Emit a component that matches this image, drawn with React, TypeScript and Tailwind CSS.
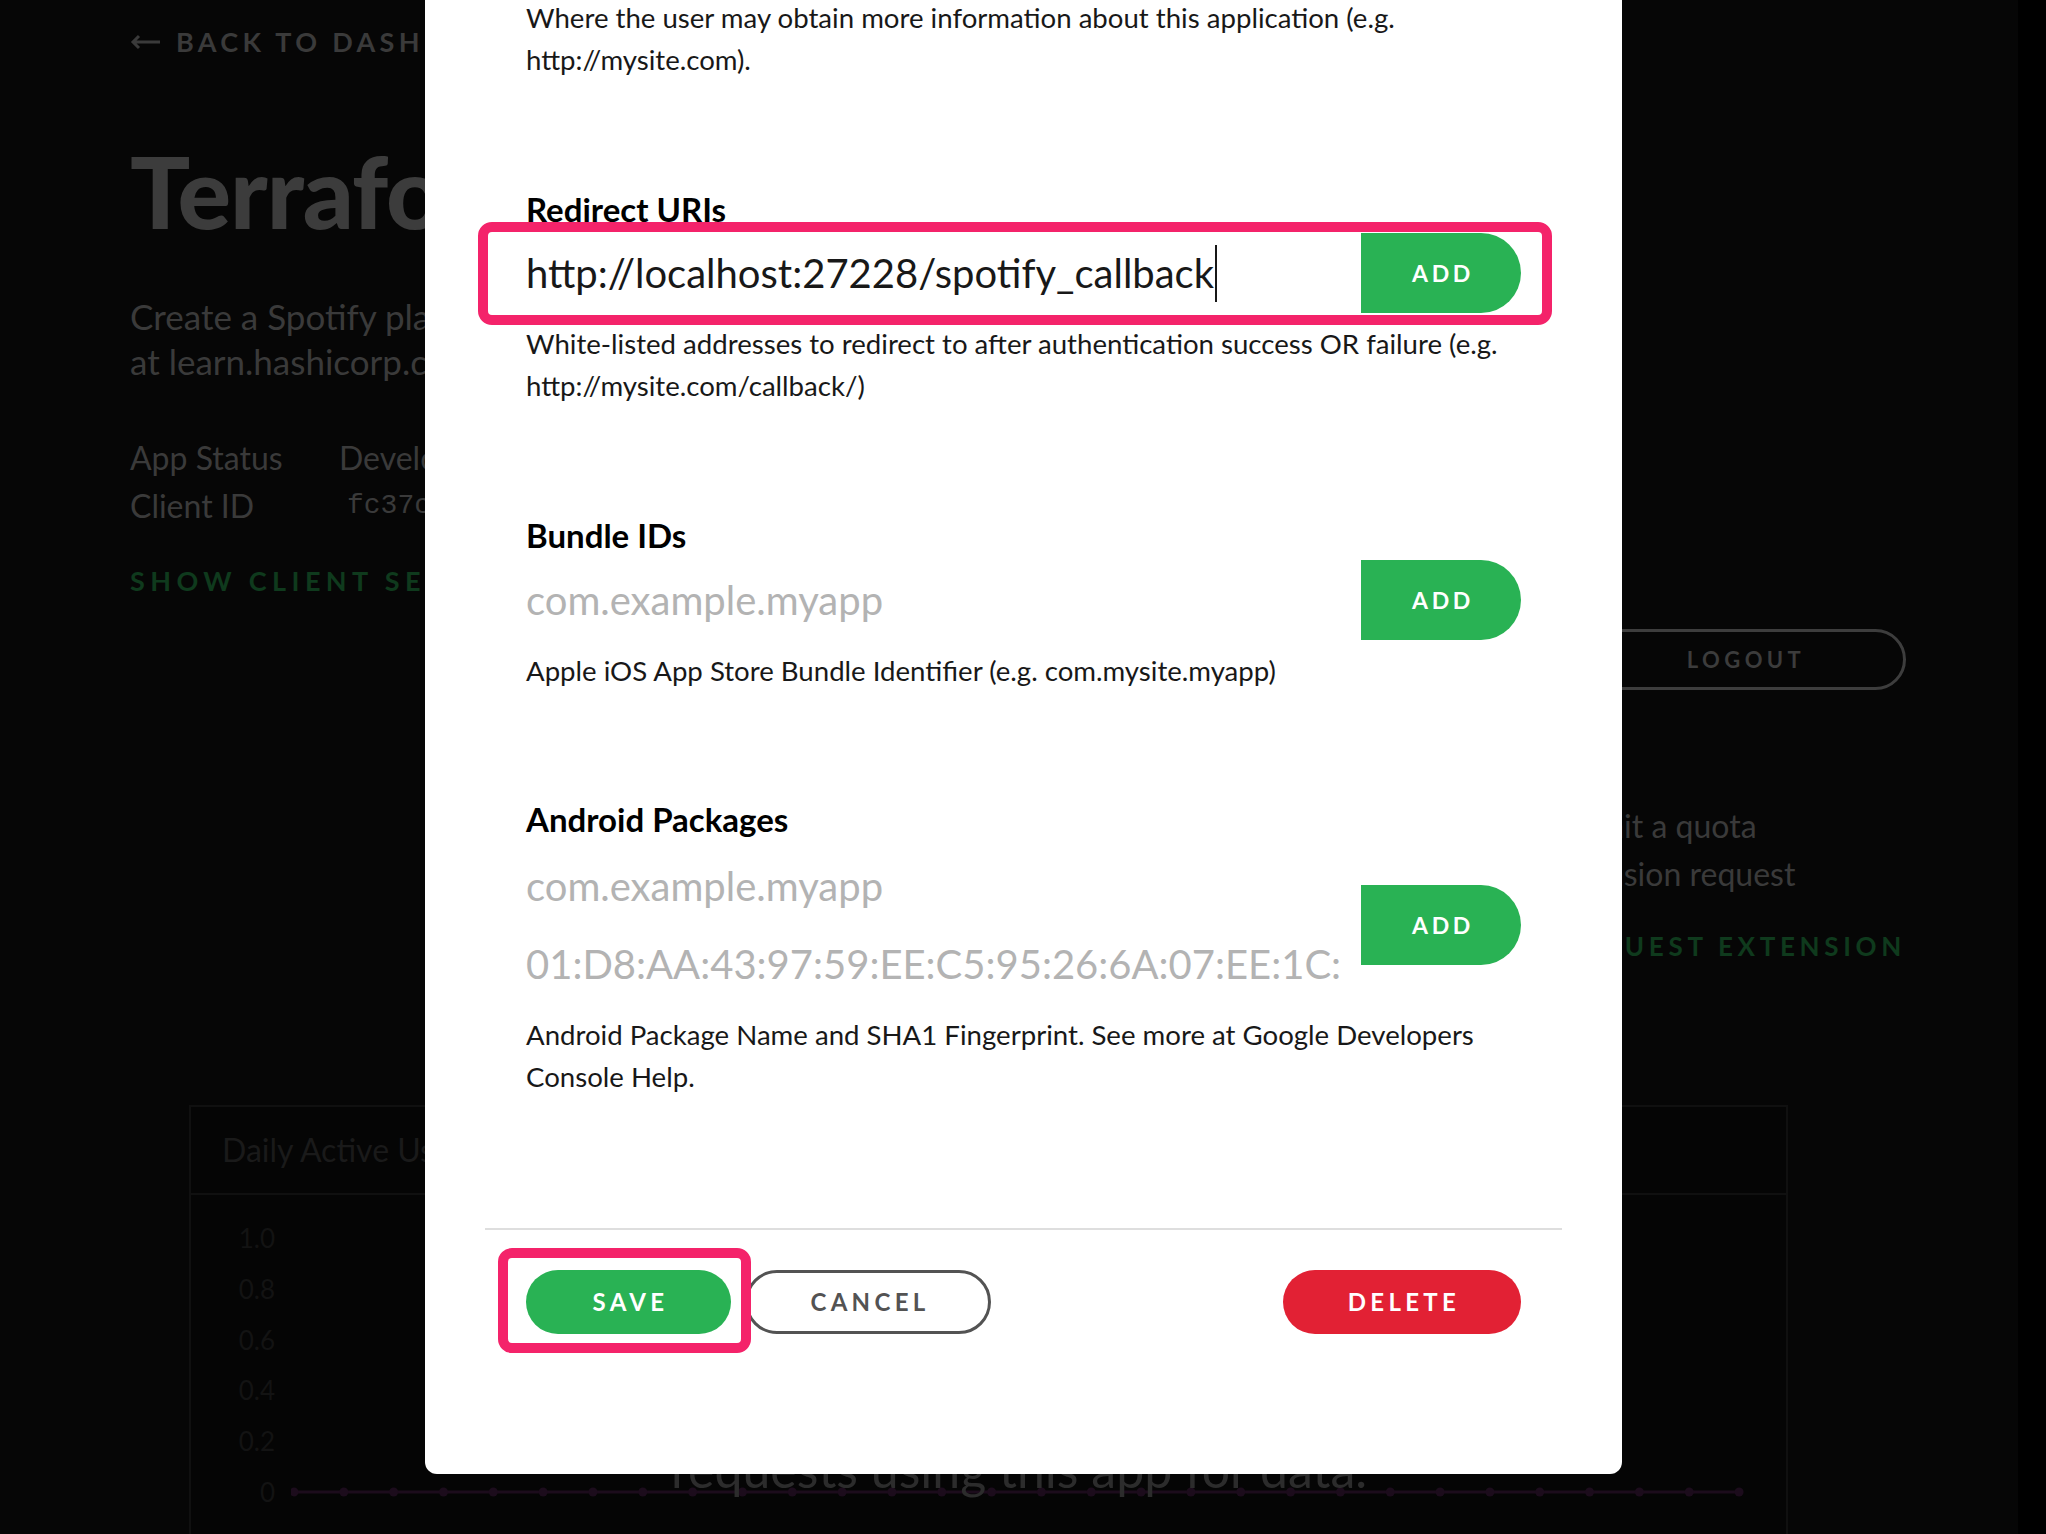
import React from 'react';

function AddButton() {
  return (
    <button className="h-[80px] w-[160px] shrink-0 rounded-r-full bg-[#29b254] pl-[4px] text-[23px] font-bold tracking-[0.16em] text-white">
      ADD
    </button>
  );
}

function FieldLabel({ children, className = '' }: { children: React.ReactNode; className?: string }) {
  return <h3 className={`text-[33px] font-bold leading-[36px] text-black ${className}`}>{children}</h3>;
}

function HelpText({ children, className = '' }: { children: React.ReactNode; className?: string }) {
  return <p className={`text-[27.6px] leading-[42px] text-[#181818] ${className}`}>{children}</p>;
}

const DOTS = Array.from({ length: 30 }, (_, i) => 3 + i * 49.83);

function Background() {
  return (
    <div className="flex h-full">
      <div className="relative flex-1">
        <div className="flex pl-[130px] pr-[112px]">
          {/* left column */}
          <div className="flex-1">
            <div className="mt-[27px] flex items-center gap-[16px] text-[27px] font-bold leading-[30px] tracking-[0.16em] text-[#3a3a3a]">
              <svg width="30" height="16" viewBox="0 0 30 16" fill="none" stroke="#3a3a3a" strokeWidth="3">
                <path d="M30 8H3M9 2L3 8l6 6" />
              </svg>
              <span>BACK TO DASHBOARD</span>
            </div>
            <h1 className="mt-[78px] text-[100px] font-black leading-[110px] tracking-[-0.01em] text-[#3c3c3c]">
              Terraform Playlist
            </h1>
            <p className="mt-[49px] text-[35px] leading-[45px] text-[#3a3a3a]">
              Create a Spotify playlist with Terraform. Tutorial
              <br />
              at learn.hashicorp.com
            </p>
            <div className="mt-[50px] grid grid-cols-[209px_1fr] text-[32px] leading-[48px] text-[#3a3a3a]">
              <span>App Status</span>
              <span>Development mode</span>
              <span>Client ID</span>
              <span className="pl-[8px] font-['Liberation_Mono',monospace] text-[28px]">fc37c0a1b2</span>
            </div>
            <div className="mt-[36px] text-[27px] font-bold leading-[30px] tracking-[0.2em] text-[#0f3a1d]">
              SHOW CLIENT SECRET
            </div>
          </div>
          {/* right column */}
          <div className="flex w-[361px] flex-col items-end">
            <button className="mt-[629px] h-[61px] w-[320px] rounded-full border-[3px] border-[#3d3d3d] text-[22px] font-bold tracking-[0.2em] text-[#3c3c3c]">
              LOGOUT
            </button>
            <p className="mt-[112px] w-full text-[32px] leading-[48px] text-[#3a3a3a]">
              Submit a quota
              <br />
              extension request
            </p>
            <div className="mt-[33px] w-full text-right text-[26px] font-bold leading-[30px] tracking-[0.18em] text-[#0f3a1d]">
              REQUEST EXTENSION
            </div>
          </div>
        </div>

        {/* chart card */}
        <div className="ml-[189px] mt-[144px] w-[1599px] border-2 border-[#101010] bg-[#050505]">
          <div className="flex h-[88px] items-center border-b-2 border-[#101010]">
            <div className="flex h-full items-center whitespace-nowrap border-r-2 border-[#0e0e0e] pl-[31px] pr-[40px] text-[32px] text-[#1a1a1a]">
              Daily Active Users
            </div>
          </div>
          <div className="relative flex h-[400px]">
            <div className="flex w-[84px] flex-col items-end pt-[18px] text-[26px] leading-[50.8px] text-[#131313]">
              <span>1.0</span>
              <span>0.8</span>
              <span>0.6</span>
              <span>0.4</span>
              <span>0.2</span>
              <span>0</span>
            </div>
            <div className="relative ml-[16px] flex-1">
              <svg className="absolute left-0 top-[287px]" width="1460" height="20" viewBox="0 0 1460 20">
                <line x1="3" y1="10" x2="1448" y2="10" stroke="#1c0c1c" strokeWidth="3" />
                {DOTS.map((x) => (
                  <circle key={x} cx={x} cy="10" r="4.5" fill="#1c0c1c" />
                ))}
              </svg>
              <div className="absolute left-0 top-[190px] w-[1456px] text-center text-[50px] leading-[56px] text-[#2c2c2c]">
                There is no data yet. Start making
                <br />
                requests using this app for data.
              </div>
            </div>
          </div>
        </div>
      </div>
      <div className="w-[28px] bg-black" />
    </div>
  );
}

function Modal() {
  return (
    <div className="absolute left-[425px] top-0 flex h-[1474px] w-[1197px] flex-col rounded-b-[12px] bg-white">
      <div className="flex flex-col px-[101px]">
        <HelpText className="-mt-[3px]">
          Where the user may obtain more information about this application (e.g.
          <br />
          http://mysite.com).
        </HelpText>

        <FieldLabel className="mt-[110px]">Redirect URIs</FieldLabel>
        <div className="relative mt-[6px] flex h-[80px] items-center">
          <div className="pointer-events-none absolute -bottom-[12px] -left-[48px] -right-[31px] -top-[11px] rounded-[14px] border-[10px] border-[#f4236a]" />
          <div className="flex flex-1 items-center text-[40px] text-[#181818]">
            <span>http://localhost:27228/spotify_callback</span>
            <span className="ml-[1px] h-[57px] w-[2px] bg-[#181818]" />
          </div>
          <AddButton />
        </div>
        <HelpText className="mt-[10px]">
          White-listed addresses to redirect to after authentication success OR failure (e.g.
          <br />
          http://mysite.com/callback/)
        </HelpText>

        <FieldLabel className="mt-[110px]">Bundle IDs</FieldLabel>
        <div className="mt-[7px] flex h-[80px] items-center">
          <div className="flex-1 text-[40px] text-[#b3b3b3]">com.example.myapp</div>
          <AddButton />
        </div>
        <HelpText className="mt-[10px]">Apple iOS App Store Bundle Identifier (e.g. com.mysite.myapp)</HelpText>

        <FieldLabel className="mt-[109px]">Android Packages</FieldLabel>
        <div className="mt-[10px] flex items-center">
          <div className="flex flex-1 flex-col text-[40px] text-[#b3b3b3]">
            <div className="flex h-[78px] items-center">com.example.myapp</div>
            <div className="flex h-[78px] items-center">01:D8:AA:43:97:59:EE:C5:95:26:6A:07:EE:1C:</div>
          </div>
          <AddButton />
        </div>
        <HelpText className="mt-[11px]">
          Android Package Name and SHA1 Fingerprint. See more at Google Developers
          <br />
          Console Help.
        </HelpText>
      </div>

      <div className="mx-[60px] mt-auto mb-[140px] border-t-2 border-[#dedede] px-[41px] pt-[40px]">
        <div className="flex items-center">
          <div className="relative">
            <div className="pointer-events-none absolute -bottom-[19px] -left-[28px] -right-[20px] -top-[22px] rounded-[14px] border-[10px] border-[#f4236a]" />
            <button className="h-[64px] w-[205px] rounded-full bg-[#29b254] pl-[4px] text-[24px] font-bold tracking-[0.18em] text-white">
              SAVE
            </button>
          </div>
          <button className="ml-[14px] h-[64px] w-[246px] rounded-full border-[3px] border-[#535353] bg-white pl-[4px] text-[24px] font-bold tracking-[0.18em] text-[#535353]">
            CANCEL
          </button>
          <button className="ml-auto h-[64px] w-[238px] rounded-full bg-[#e22134] pl-[4px] text-[24px] font-bold tracking-[0.18em] text-white">
            DELETE
          </button>
        </div>
      </div>
    </div>
  );
}

export default function App() {
  return (
    <div className="relative h-[1534px] w-full overflow-hidden bg-[#060606] font-['Lato',sans-serif]">
      <Background />
      <Modal />
    </div>
  );
}
